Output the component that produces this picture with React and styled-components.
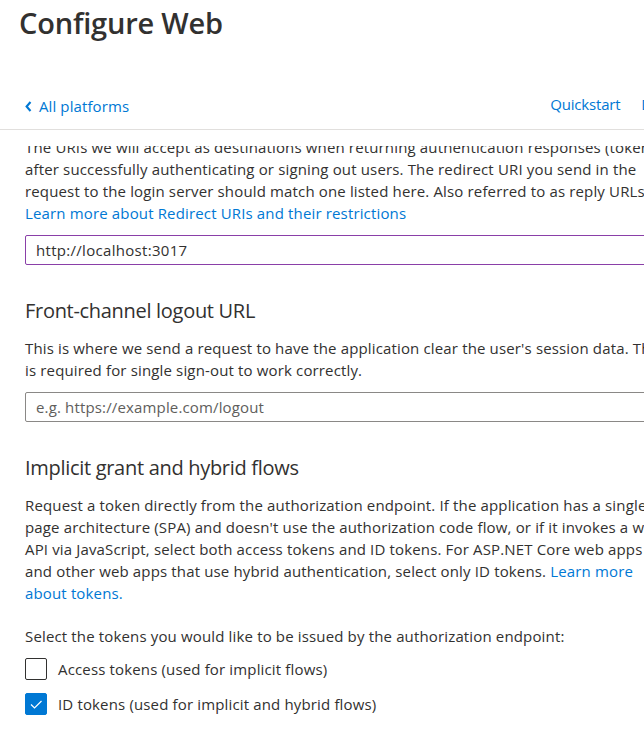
import React, { useLayoutEffect, useRef } from "react";
import styled, { createGlobalStyle } from "styled-components";

const GlobalStyle = createGlobalStyle`
	html, body {
		margin: 0;
		padding: 0;
		background: #fff;
		overflow: hidden;
	}
	body {
		font-family: "Open Sans", "Noto Sans", sans-serif;
		color: #323130;
	}
`;

const Page = styled.div`
	width: 720px;
	height: 731px;
	display: flex;
	flex-direction: column;
	background: #fff;
`;

const Header = styled.header`
	flex: none;
	padding-bottom: 16px;
`;

const Title = styled.h1`
	margin: 0;
	padding: 4px 0 0 19px;
	height: 77px;
	box-sizing: border-box;
	font-size: 29px;
	font-weight: 600;
	letter-spacing: -0.2px;
	line-height: 38px;
	color: #323130;
`;

const Nav = styled.nav`
	display: flex;
	align-items: flex-start;
	height: 53px;
	padding: 19px 0 0 25px;
	border-bottom: 1px solid #e1dfdd;
	box-sizing: border-box;
`;

const NavLink = styled.a`
	display: inline-flex;
	align-items: center;
	gap: 7px;
	font-size: 15px;
	line-height: 20px;
	letter-spacing: ${(p) => (p.$tight ? "-0.2px" : "0.1px")};
	color: #0078d4;
	text-decoration: none;
	white-space: nowrap;
`;

const NavRight = styled.div`
	margin-left: auto;
	display: flex;
	gap: 21px;
	margin-top: -2px;
	padding-right: 44px;
`;

const Scroller = styled.div`
	position: relative;
	flex: 1;
	overflow: hidden;
	padding: 0 0 80px 25px;
`;

const Section = styled.section`
	display: flex;
	flex-direction: column;
	align-items: flex-start;
`;

const SectionTitle = styled.h2`
	margin: ${(p) => (p.$first ? "0" : "32px")} 0 12px;
	font-size: 20px;
	font-weight: 400;
	letter-spacing: -0.3px;
	line-height: 28px;
	color: #323130;
`;

const Text = styled.p`
	margin: 0;
	font-size: 15px;
	letter-spacing: 0.15px;
	line-height: 22px;
	white-space: nowrap;
	color: #323130;
`;

const Link = styled.a`
	color: #0078d4;
	text-decoration: none;
`;

const Input = styled.input`
	margin-top: 11px;
	width: 660px;
	height: 30px;
	box-sizing: border-box;
	padding: 0 10px;
	font-family: inherit;
	font-size: 15px;
	letter-spacing: 0.3px;
	color: #323130;
	border: 1px solid ${(p) => (p.$focused ? "#8a3fa8" : "#8a8886")};
	border-radius: 2px;
	outline: none;
	&::placeholder {
		color: #605e5c;
		letter-spacing: 0.15px;
	}
`;

const Prompt = styled(Text)`
	margin-top: 21px;
`;

const Options = styled.div`
	display: flex;
	flex-direction: column;
	gap: 13px;
	margin-top: 11px;
`;

const Option = styled.label`
	display: flex;
	align-items: center;
	gap: 11px;
	font-size: 15px;
	letter-spacing: 0.15px;
	line-height: 22px;
	color: #323130;
`;

const Box = styled.span`
	width: 22px;
	height: 22px;
	box-sizing: border-box;
	border-radius: 2px;
	border: 1px solid ${(p) => (p.$checked ? "#0078d4" : "#323130")};
	background: ${(p) => (p.$checked ? "#0078d4" : "#fff")};
	display: flex;
	align-items: center;
	justify-content: center;
`;

const Chevron = () => (
	<svg width="7" height="11" viewBox="0 0 7 11">
		<path d="M5.5 1 L1.6 5.5 L5.5 10" fill="none" stroke="#0078d4" strokeWidth="2.1" />
	</svg>
);

const Checkbox = ({ checked, children }) => (
	<Option>
		<Box $checked={checked}>
			{checked && (
				<svg width="20" height="20" viewBox="0 0 20 20">
					<path d="M5 10.5 L8.5 14 L15.5 7" fill="none" stroke="#fff" strokeWidth="1.2" />
				</svg>
			)}
		</Box>
		{children}
	</Option>
);

export default function App() {
	const scroller = useRef(null);
	const firstPara = useRef(null);

	useLayoutEffect(() => {
		// the list is scrolled so the first line of the redirect text is half hidden under the header
		scroller.current.scrollTop = firstPara.current.offsetTop + 10;
	}, []);

	return (
		<Page>
			<GlobalStyle />
			<Header>
				<Title>Configure Web</Title>
				<Nav>
					<NavLink href="#">
						<Chevron />
						All platforms
					</NavLink>
					<NavRight>
						<NavLink href="#" $tight>Quickstart</NavLink>
						<NavLink href="#">Docs</NavLink>
					</NavRight>
				</Nav>
			</Header>
			<Scroller ref={scroller}>
				<Section>
					<SectionTitle $first>Redirect URIs</SectionTitle>
					<Text ref={firstPara}>
						The URIs we will accept as destinations when returning authentication responses (tokens)
						<br />
						after successfully authenticating or signing out users. The redirect URI you send in the
						<br />
						request to the login server should match one listed here. Also referred to as reply URLs.
						<br />
						<Link href="#">Learn more about Redirect URIs and their restrictions</Link>
					</Text>
					<Input $focused defaultValue="http://localhost:3017" />
				</Section>
				<Section>
					<SectionTitle>Front-channel logout URL</SectionTitle>
					<Text>
						This is where we send a request to have the application clear the user's session data. This
						<br />
						is required for single sign-out to work correctly.
					</Text>
					<Input placeholder="e.g. https://example.com/logout" />
				</Section>
				<Section>
					<SectionTitle>Implicit grant and hybrid flows</SectionTitle>
					<Text>
						Request a token directly from the authorization endpoint. If the application has a single-
						<br />
						page architecture (SPA) and doesn't use the authorization code flow, or if it invokes a web
						<br />
						API via JavaScript, select both access tokens and ID tokens. For ASP.NET Core web apps
						<br />
						and other web apps that use hybrid authentication, select only ID tokens.{" "}
						<Link href="#">
							Learn more
							<br />
							about tokens.
						</Link>
					</Text>
					<Prompt>Select the tokens you would like to be issued by the authorization endpoint:</Prompt>
					<Options>
						<Checkbox>Access tokens (used for implicit flows)</Checkbox>
						<Checkbox checked>ID tokens (used for implicit and hybrid flows)</Checkbox>
					</Options>
				</Section>
			</Scroller>
		</Page>
	);
}
